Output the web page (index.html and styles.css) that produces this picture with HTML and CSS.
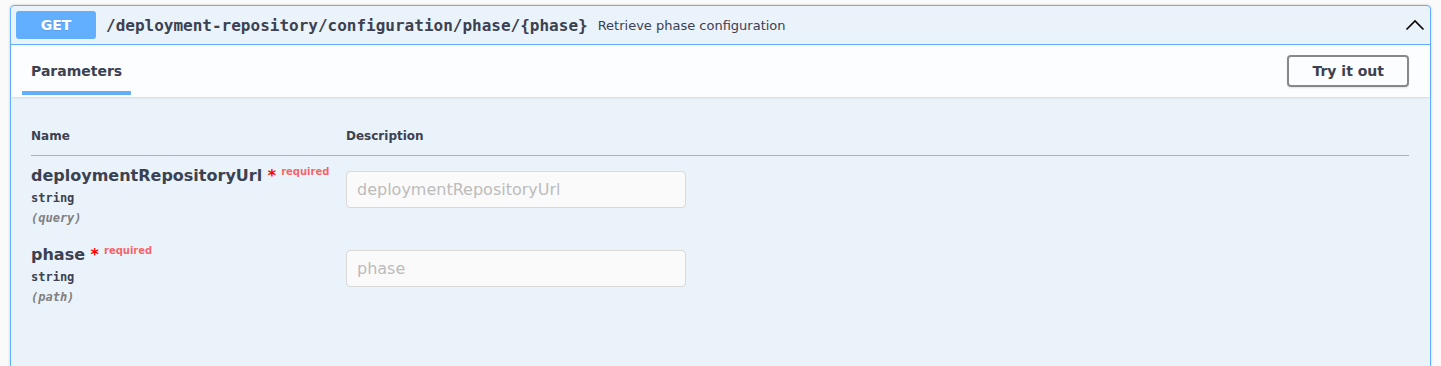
FILE: index.html
```html
<!DOCTYPE html>
<html lang="en">
<head>
  <meta charset="UTF-8" />
  <meta name="viewport" content="width=device-width, initial-scale=1.0" />
  <title>Deployment Repository API</title>
  <link rel="stylesheet" href="styles.css">
</head>
<body>
  <div class="opblock">
    <div class="opblock-summary">
      <span class="method">GET</span>
      <span class="path">/deployment-repository/configuration/phase/{phase}</span>
      <span class="summary-desc">Retrieve phase configuration</span>
      <svg class="arrow" width="20" height="20" viewBox="0 0 20 20">
        <polyline points="1.5,14.5 10,6 18.5,14.5" fill="none" stroke="#000" stroke-width="1.6" />
      </svg>
    </div>

    <div class="opblock-body">
      <div class="section-header">
        <div class="tab-item">Parameters</div>
        <button class="try-out">Try it out</button>
      </div>

      <div class="table-wrap">
        <table class="parameters">
          <thead>
            <tr>
              <th class="col-name">Name</th>
              <th>Description</th>
            </tr>
          </thead>
          <tbody>
            <tr>
              <td class="col-name">
                <div class="param-name">deploymentRepositoryUrl<span class="star">&nbsp;*</span><sup class="required">required</sup></div>
                <div class="param-type">string</div>
                <div class="param-in">(query)</div>
              </td>
              <td>
                <input type="text" placeholder="deploymentRepositoryUrl" disabled />
              </td>
            </tr>
            <tr>
              <td class="col-name">
                <div class="param-name">phase<span class="star">&nbsp;*</span><sup class="required">required</sup></div>
                <div class="param-type">string</div>
                <div class="param-in">(path)</div>
              </td>
              <td>
                <input type="text" placeholder="phase" disabled />
              </td>
            </tr>
          </tbody>
        </table>
      </div>
    </div>
  </div>
</body>
</html>
```

FILE: styles.css
```css
body {
  font-family: "DejaVu Sans", sans-serif;
  background-color: #fafafa;
  margin: 0;
  padding: 5px 10px;
  color: #3b4151;
}

.opblock {
  border: 1px solid #61affe;
  border-radius: 4px;
  background: rgba(97, 175, 254, 0.1);
  box-shadow: 0 0 3px rgba(0, 0, 0, 0.19);
}

.opblock-summary {
  display: flex;
  align-items: center;
  padding: 5px;
  border-bottom: 1px solid #61affe;
}

.method {
  min-width: 80px;
  height: 28px;
  line-height: 28px;
  text-align: center;
  background-color: #61affe;
  color: #fff;
  font-size: 14px;
  font-weight: bold;
  border-radius: 3px;
  text-shadow: 0 1px 0 rgba(0, 0, 0, 0.1);
}

.path {
  font-family: "DejaVu Sans Mono", monospace;
  font-size: 16px;
  font-weight: 600;
  padding: 0 10px;
}

.summary-desc {
  flex: 1;
  font-size: 13px;
}

.arrow {
  display: block;
}

.section-header {
  display: flex;
  align-items: center;
  justify-content: space-between;
  min-height: 52px;
  padding: 0 21px 0 20px;
  background: rgba(255, 255, 255, 0.8);
  box-shadow: 0 1px 2px rgba(0, 0, 0, 0.1);
}

.tab-item {
  position: relative;
  font-size: 14px;
  font-weight: bold;
}

.tab-item::after {
  content: "";
  position: absolute;
  left: -10%;
  width: 120%;
  bottom: -16px;
  height: 4px;
  background: #61affe;
}

.try-out {
  font-family: inherit;
  font-size: 14px;
  font-weight: bold;
  color: #3b4151;
  background: transparent;
  border: 2px solid #888;
  border-radius: 4px;
  padding: 5px 23px;
  line-height: 18px;
  box-shadow: 0 1px 2px rgba(0, 0, 0, 0.1);
}

.table-wrap {
  padding: 20px 21px 60px 20px;
}

.parameters {
  width: 100%;
  border-collapse: collapse;
}

.parameters th {
  text-align: left;
  font-size: 12px;
  font-weight: bold;
  line-height: 14px;
  padding: 12px 0;
  border-bottom: 1px solid rgba(59, 65, 81, 0.2);
}

.parameters td {
  vertical-align: top;
  padding: 10px 0;
}

.col-name {
  width: 315px;
}

.param-name {
  font-size: 16px;
  font-weight: bold;
  line-height: 20px;
}

.star {
  color: red;
}

.required {
  font-size: 10px;
  color: rgba(255, 0, 0, 0.6);
  vertical-align: top;
  position: relative;
  top: -4px;
  padding-left: 5px;
}

.param-type {
  font-family: "DejaVu Sans Mono", monospace;
  font-size: 12px;
  font-weight: 600;
  line-height: 14px;
  padding: 5px 0 6px;
}

.param-in {
  font-family: "DejaVu Sans Mono", monospace;
  font-size: 12px;
  font-weight: 600;
  font-style: italic;
  line-height: 14px;
  color: #808080;
}

.parameters input {
  display: block;
  box-sizing: border-box;
  width: 340px;
  height: 37px;
  margin: 5px 0;
  padding: 8px 10px;
  font-family: inherit;
  font-size: 16px;
  background: #fafafa;
  border: 1px solid #d9d9d9;
  border-radius: 4px;
}

.parameters input::placeholder {
  color: #bcbcbc;
}
```
